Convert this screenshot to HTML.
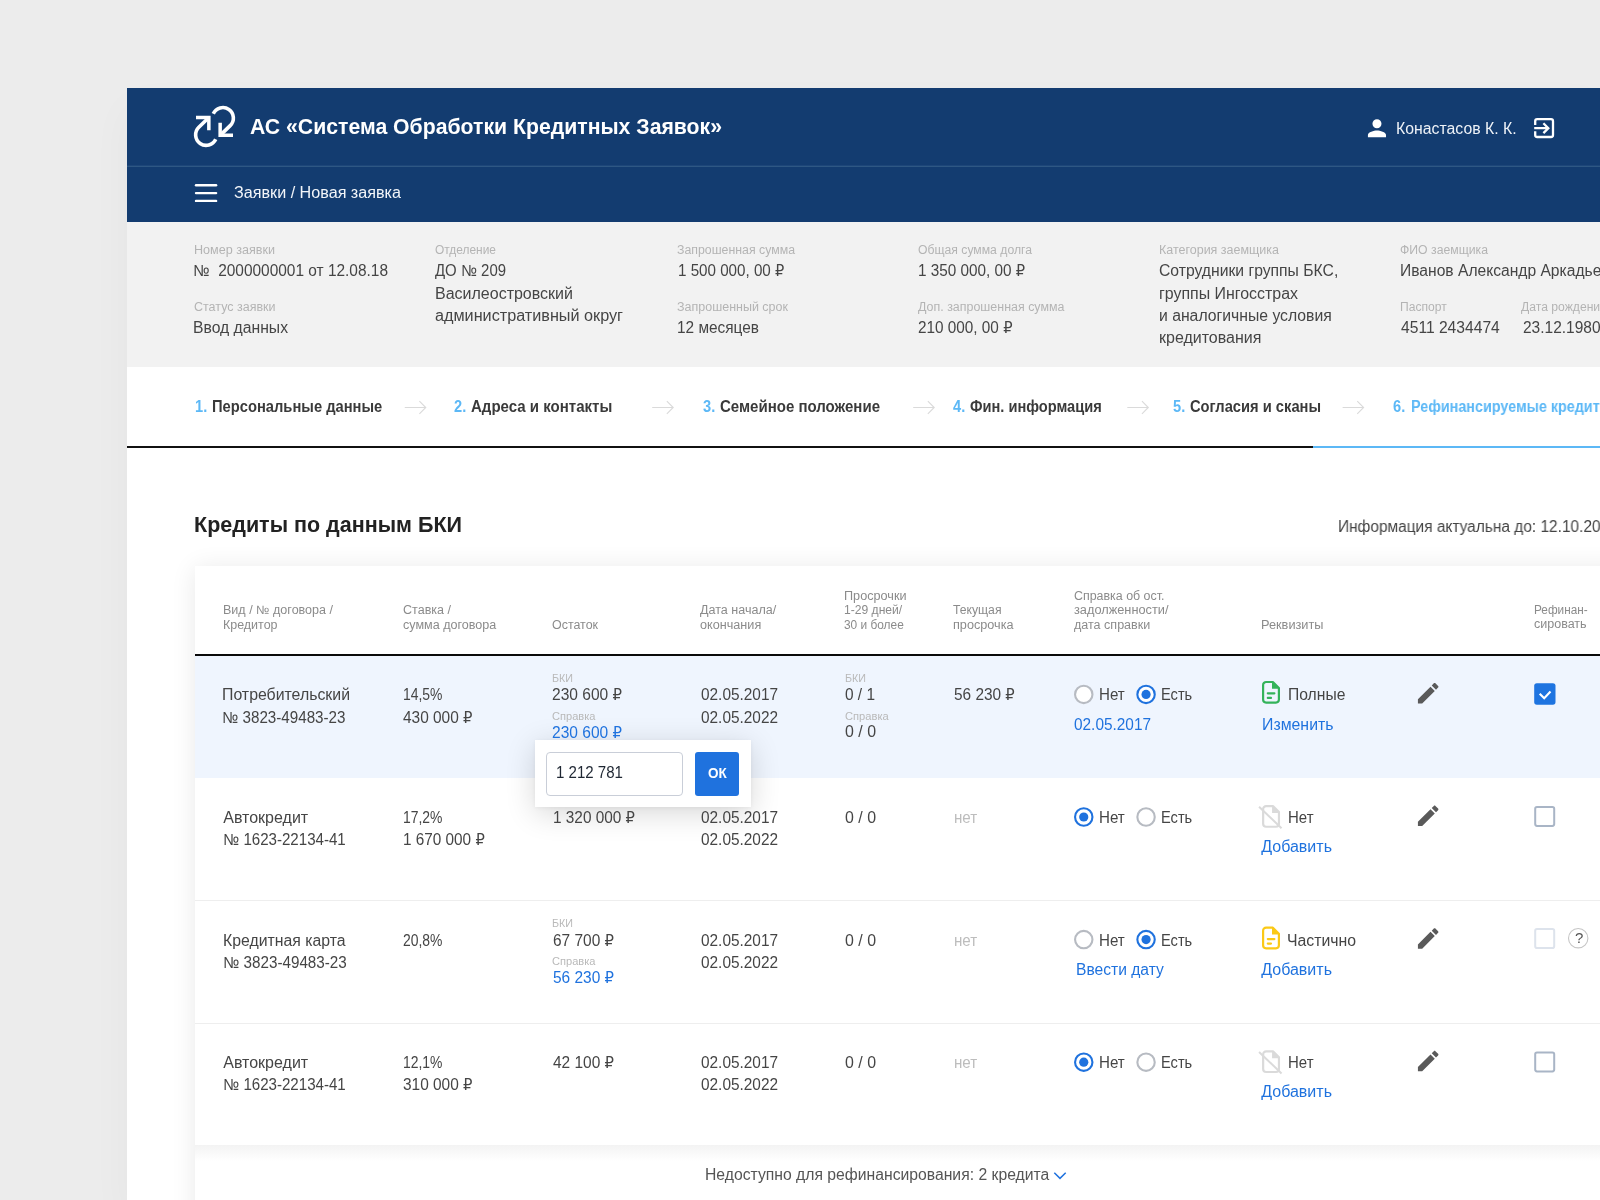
<!DOCTYPE html>
<html lang="ru">
<head>
<meta charset="utf-8">
<title>АС «Система Обработки Кредитных Заявок»</title>
<style>
html,body{margin:0;padding:0;}
body{width:1600px;height:1200px;overflow:hidden;background:#ececec;position:relative;font-family:"Liberation Sans","DejaVu Sans",sans-serif;}
.abs{position:absolute;}
.t{position:absolute;white-space:nowrap;margin:0;padding:0;transform-origin:0 50%;}
.r{font-family:"DejaVu Sans",sans-serif;font-size:.96em;letter-spacing:0;}
#app{left:127px;top:88px;width:1473px;height:1112px;background:#fff;box-shadow:0 20px 40px rgba(0,0,0,.035);}
#hdr{left:127px;top:88px;width:1473px;height:134px;background:#133c70;}
#hsep{left:127px;top:165px;width:1473px;height:1px;background:#1d4679;}
#hsep2{left:127px;top:166px;width:1473px;height:1px;background:#2e5783;}
#info{left:127px;top:222px;width:1473px;height:145px;background:#f2f2f2;}
#sline{left:127px;top:446px;width:1186px;height:2px;background:#111;}
#bline{left:1313px;top:446px;width:287px;height:2px;background:#5cb8f6;}
#card{left:195px;top:566px;width:1500px;height:700px;background:#fff;box-shadow:0 2px 24px rgba(0,0,0,.09);}
#thline{left:195px;top:654px;width:1405px;height:2px;background:#0a0a0a;}
#row1{left:195px;top:656px;width:1405px;height:122px;background:#eff5fe;}
.sep{left:195px;width:1405px;height:1px;background:#eeeeee;}
#fshadow{left:195px;top:1145px;width:1405px;height:16px;background:linear-gradient(#f3f3f3,#fff);}
#pop{left:535px;top:740px;width:216px;height:67px;background:#fff;box-shadow:0 6px 30px rgba(0,0,0,.16),0 1px 4px rgba(0,0,0,.05);}
#inp{left:546px;top:751.5px;width:135px;height:42.5px;border:1px solid #c9ced8;border-radius:4px;background:#fff;}
#btn{left:694.5px;top:751.5px;width:44.5px;height:44.5px;border-radius:3px;background:#1f72de;}
svg{position:absolute;overflow:visible;}
</style>
</head>
<body>
<div class="abs" id="app"></div>
<div class="abs" id="hdr"></div>
<div class="abs" id="hsep"></div>
<div class="abs" id="hsep2"></div>
<div class="abs" id="info"></div>
<div class="abs" id="sline"></div>
<div class="abs" id="bline"></div>
<div class="abs" id="card"></div>
<div class="abs" id="row1"></div>
<div class="abs" id="thline"></div>
<div class="abs sep" style="top:900px"></div>
<div class="abs sep" style="top:1023px"></div>
<div class="abs" id="fshadow"></div>
<svg class="abs" style="left:0;top:0" width="1600" height="1200" viewBox="0 0 1600 1200" ><g><path d="M196,117.55 H208.85 V130.2" fill="none" stroke="#fff" stroke-width="3.5" stroke-linejoin="miter"/><path d="M208.6,117.8 L198.81,127.3 A10.5,10.5 0 1 0 215.7,139.15" fill="none" stroke="#fff" stroke-width="3.6"/></g><g transform="rotate(180 214.5 126.46)"><path d="M196,117.55 H208.85 V130.2" fill="none" stroke="#fff" stroke-width="3.5" stroke-linejoin="miter"/><path d="M208.6,117.8 L198.81,127.3 A10.5,10.5 0 1 0 215.7,139.15" fill="none" stroke="#fff" stroke-width="3.6"/></g><path d="M196,185.3 H216.1" stroke="#fff" stroke-width="2.4" stroke-linecap="round" fill="none"/><path d="M196,193.1 H216.1" stroke="#fff" stroke-width="2.4" stroke-linecap="round" fill="none"/><path d="M196,200.9 H216.1" stroke="#fff" stroke-width="2.4" stroke-linecap="round" fill="none"/><g transform="translate(1363.4 114.7) scale(1.131)"><path fill="#fff" d="M12 12c2.21 0 4-1.79 4-4s-1.79-4-4-4-4 1.79-4 4 1.79 4 4 4zm0 2c-2.67 0-8 1.34-8 4v2h16v-2c0-2.66-5.33-4-8-4z"/></g><path d="M1535.2,124.9 V121.2 a2,2 0 0 1 2,-2 H1551 a2,2 0 0 1 2,2 V135 a2,2 0 0 1 -2,2 H1537.2 a2,2 0 0 1 -2,-2 V131.3" fill="none" stroke="#fff" stroke-width="2.3"/><path d="M1534.2,128.2 H1547.6 M1543.4,123.3 L1548.3,128.2 L1543.4,133.1" fill="none" stroke="#fff" stroke-width="2.3" stroke-linejoin="miter"/><path d="M404.75,407.5 H425.75 M419.4,401.15 L425.75,407.5 L419.4,413.85" fill="none" stroke="#dadada" stroke-width="1.1"/><path d="M652.2,407.5 H673.2 M666.85,401.15 L673.2,407.5 L666.85,413.85" fill="none" stroke="#dadada" stroke-width="1.1"/><path d="M913.2,407.5 H934.2 M927.85,401.15 L934.2,407.5 L927.85,413.85" fill="none" stroke="#dadada" stroke-width="1.1"/><path d="M1127.3,407.5 H1148.3 M1141.95,401.15 L1148.3,407.5 L1141.95,413.85" fill="none" stroke="#dadada" stroke-width="1.1"/><path d="M1342.6,407.5 H1363.6 M1357.25,401.15 L1363.6,407.5 L1357.25,413.85" fill="none" stroke="#dadada" stroke-width="1.1"/><circle cx="1083.75" cy="694.4" r="8.7" fill="#fff" stroke="#b7bbc2" stroke-width="2.1"/><circle cx="1146.05" cy="694.4" r="8.7" fill="#fff" stroke="#1f72de" stroke-width="2.1"/><circle cx="1146.05" cy="694.4" r="4.6" fill="#1f72de"/><circle cx="1083.75" cy="817.0" r="8.7" fill="#fff" stroke="#1f72de" stroke-width="2.1"/><circle cx="1083.75" cy="817.0" r="4.6" fill="#1f72de"/><circle cx="1146.05" cy="817.0" r="8.7" fill="#fff" stroke="#b7bbc2" stroke-width="2.1"/><circle cx="1083.75" cy="939.5999999999999" r="8.7" fill="#fff" stroke="#b7bbc2" stroke-width="2.1"/><circle cx="1146.05" cy="939.5999999999999" r="8.7" fill="#fff" stroke="#1f72de" stroke-width="2.1"/><circle cx="1146.05" cy="939.5999999999999" r="4.6" fill="#1f72de"/><circle cx="1083.75" cy="1062.2" r="8.7" fill="#fff" stroke="#1f72de" stroke-width="2.1"/><circle cx="1083.75" cy="1062.2" r="4.6" fill="#1f72de"/><circle cx="1146.05" cy="1062.2" r="8.7" fill="#fff" stroke="#b7bbc2" stroke-width="2.1"/><g transform="translate(1262 680.9)"><path d="M4.1,1.1 H10.9 L16.9,7.1 V18.7 a3,3 0 0 1 -3,3 H4.1 a3,3 0 0 1 -3,-3 V4.1 a3,3 0 0 1 3,-3 z" fill="none" stroke="#34b35a" stroke-width="2.2" stroke-linejoin="round"/><path d="M10,1.1 V7.9 H16.9 L10.9,1.1z" fill="#34b35a"/><path d="M5.8,12.45 H12.4 M5.8,17 H9" fill="none" stroke="#34b35a" stroke-width="2.2" stroke-linecap="round"/></g><g transform="translate(1262.05 805.05)"><path d="M4.1,1.1 H10.9 L16.9,7.1 V18.7 a3,3 0 0 1 -3,3 H4.1 a3,3 0 0 1 -3,-3 V4.1 a3,3 0 0 1 3,-3 z" fill="none" stroke="#dadada" stroke-width="2.2" stroke-linejoin="round"/><path d="M10,1.1 V7.9 H16.9 L10.9,1.1z" fill="#dadada"/><path d="M-3,1.65 L19.5,23.25" fill="none" stroke="#dadada" stroke-width="2"/></g><g transform="translate(1262 926.6)"><path d="M4.1,1.1 H10.9 L16.9,7.1 V18.7 a3,3 0 0 1 -3,3 H4.1 a3,3 0 0 1 -3,-3 V4.1 a3,3 0 0 1 3,-3 z" fill="none" stroke="#fbc916" stroke-width="2.2" stroke-linejoin="round"/><path d="M10,1.1 V7.9 H16.9 L10.9,1.1z" fill="#fbc916"/><path d="M5.8,12.45 H12.4 M5.8,17 H9" fill="none" stroke="#fbc916" stroke-width="2.2" stroke-linecap="round"/></g><g transform="translate(1262.05 1050.3)"><path d="M4.1,1.1 H10.9 L16.9,7.1 V18.7 a3,3 0 0 1 -3,3 H4.1 a3,3 0 0 1 -3,-3 V4.1 a3,3 0 0 1 3,-3 z" fill="none" stroke="#dadada" stroke-width="2.2" stroke-linejoin="round"/><path d="M10,1.1 V7.9 H16.9 L10.9,1.1z" fill="#dadada"/><path d="M-3,1.65 L19.5,23.25" fill="none" stroke="#dadada" stroke-width="2"/></g><g transform="translate(1414.5 679.6) scale(1.139)"><path fill="#5a5a5a" d="M3 17.25V21h3.75L17.81 9.94l-3.75-3.75L3 17.25zM20.71 7.04c.39-.39.39-1.02 0-1.41l-2.34-2.34c-.39-.39-1.02-.39-1.41 0l-1.83 1.83 3.75 3.75 1.83-1.83z"/></g><g transform="translate(1414.5 802.2) scale(1.139)"><path fill="#5a5a5a" d="M3 17.25V21h3.75L17.81 9.94l-3.75-3.75L3 17.25zM20.71 7.04c.39-.39.39-1.02 0-1.41l-2.34-2.34c-.39-.39-1.02-.39-1.41 0l-1.83 1.83 3.75 3.75 1.83-1.83z"/></g><g transform="translate(1414.5 924.8) scale(1.139)"><path fill="#5a5a5a" d="M3 17.25V21h3.75L17.81 9.94l-3.75-3.75L3 17.25zM20.71 7.04c.39-.39.39-1.02 0-1.41l-2.34-2.34c-.39-.39-1.02-.39-1.41 0l-1.83 1.83 3.75 3.75 1.83-1.83z"/></g><g transform="translate(1414.5 1047.4) scale(1.139)"><path fill="#5a5a5a" d="M3 17.25V21h3.75L17.81 9.94l-3.75-3.75L3 17.25zM20.71 7.04c.39-.39.39-1.02 0-1.41l-2.34-2.34c-.39-.39-1.02-.39-1.41 0l-1.83 1.83 3.75 3.75 1.83-1.83z"/></g><rect x="1534.2" y="683.2" width="21.3" height="21.5" rx="2.6" fill="#1e74e0"/><path d="M1539.7,693.8000000000001 L1544.2,698.3000000000001 L1550.5,691.5" fill="none" stroke="#fff" stroke-width="2.1"/><rect x="1535.2" y="806.9" width="19" height="19" rx="1.8" fill="#fff" stroke="#a9b5c6" stroke-width="2"/><rect x="1535.2" y="929" width="19" height="19" rx="1.8" fill="#fff" stroke="#dde3ec" stroke-width="2"/><rect x="1535.2" y="1052.4" width="19" height="19" rx="1.8" fill="#fff" stroke="#a9b5c6" stroke-width="2"/><circle cx="1578.2" cy="938.2" r="9.7" fill="#fff" stroke="#c6c6c6" stroke-width="1.1"/><path d="M1054.3,1172.8 L1060,1178.4 L1065.7,1172.8" fill="none" stroke="#1f72de" stroke-width="1.5"/></svg>
<div class="abs" id="pop"></div>
<div class="abs" id="inp"></div>
<div class="abs" id="btn"></div>
<div id="txt" style="position:absolute;left:0;top:0;width:1600px;height:1200px;will-change:transform;">
<div class="t" style="left:250.00px;top:113.00px;font-size:22px;line-height:28px;color:#fff;font-weight:700;transform:scaleX(0.9650);">АС «Система Обработки Кредитных Заявок»</div>
<div class="t" style="left:1395.70px;top:119.00px;font-size:16px;line-height:20px;color:#eef2f7;transform:scaleX(0.9885);">Конастасов К. К.</div>
<div class="t" style="left:234.00px;top:183.00px;font-size:16px;line-height:20px;color:#f2f5f9;transform:scaleX(1.0094);">Заявки / Новая заявка</div>
<div class="t" style="left:194.00px;top:243.00px;font-size:12px;line-height:15px;color:#b4b4b4;transform:scaleX(1.0481);">Номер заявки</div>
<div class="t" style="left:193.00px;top:261.00px;font-size:16px;line-height:20px;color:#454545;transform:scaleX(0.9649);">№  2000000001 от 12.08.18</div>
<div class="t" style="left:194.00px;top:300.00px;font-size:12px;line-height:15px;color:#b4b4b4;transform:scaleX(1.0411);">Статус заявки</div>
<div class="t" style="left:193.00px;top:318.00px;font-size:16px;line-height:20px;color:#454545;transform:scaleX(0.9821);">Ввод данных</div>
<div class="t" style="left:435.00px;top:243.00px;font-size:12px;line-height:15px;color:#b4b4b4;transform:scaleX(0.9936);">Отделение</div>
<div class="t" style="left:435.00px;top:261.00px;font-size:16px;line-height:20px;color:#454545;transform:scaleX(0.9338);">ДО № 209</div>
<div class="t" style="left:435.00px;top:284.00px;font-size:16px;line-height:20px;color:#454545;">Василеостровский</div>
<div class="t" style="left:435.00px;top:306.00px;font-size:16px;line-height:20px;color:#454545;transform:scaleX(1.0126);">административный округ</div>
<div class="t" style="left:677.00px;top:243.00px;font-size:12px;line-height:15px;color:#b4b4b4;transform:scaleX(1.0272);">Запрошенная сумма</div>
<div class="t" style="left:677.50px;top:261.00px;font-size:16px;line-height:20px;color:#454545;transform:scaleX(0.9479);">1 500 000, 00 <span class="r">₽</span></div>
<div class="t" style="left:677.00px;top:300.00px;font-size:12px;line-height:15px;color:#b4b4b4;transform:scaleX(1.0413);">Запрошенный срок</div>
<div class="t" style="left:677.00px;top:318.00px;font-size:16px;line-height:20px;color:#454545;transform:scaleX(0.9626);">12 месяцев</div>
<div class="t" style="left:918.00px;top:243.00px;font-size:12px;line-height:15px;color:#b4b4b4;transform:scaleX(1.0163);">Общая сумма долга</div>
<div class="t" style="left:918.00px;top:261.00px;font-size:16px;line-height:20px;color:#454545;transform:scaleX(0.9546);">1 350 000, 00 <span class="r">₽</span></div>
<div class="t" style="left:918.00px;top:300.00px;font-size:12px;line-height:15px;color:#b4b4b4;transform:scaleX(1.0373);">Доп. запрошенная сумма</div>
<div class="t" style="left:918.00px;top:318.00px;font-size:16px;line-height:20px;color:#454545;transform:scaleX(0.9570);">210 000, 00 <span class="r">₽</span></div>
<div class="t" style="left:1158.75px;top:243.00px;font-size:12px;line-height:15px;color:#b4b4b4;transform:scaleX(1.0408);">Категория заемщика</div>
<div class="t" style="left:1159.00px;top:261.00px;font-size:16px;line-height:20px;color:#454545;transform:scaleX(0.9818);">Сотрудники группы БКС,</div>
<div class="t" style="left:1159.00px;top:284.00px;font-size:16px;line-height:20px;color:#454545;transform:scaleX(0.9952);">группы Ингосстрах</div>
<div class="t" style="left:1159.00px;top:306.00px;font-size:16px;line-height:20px;color:#454545;transform:scaleX(0.9840);">и аналогичные условия</div>
<div class="t" style="left:1159.00px;top:328.00px;font-size:16px;line-height:20px;color:#454545;">кредитования</div>
<div class="t" style="left:1399.50px;top:243.00px;font-size:12px;line-height:15px;color:#b4b4b4;transform:scaleX(1.0199);">ФИО заемщика</div>
<div class="t" style="left:1399.50px;top:261.00px;font-size:16px;line-height:20px;color:#454545;transform:scaleX(0.9760);">Иванов Александр Аркадьевич</div>
<div class="t" style="left:1400.00px;top:300.00px;font-size:12px;line-height:15px;color:#b4b4b4;transform:scaleX(1.0077);">Паспорт</div>
<div class="t" style="left:1401.25px;top:318.00px;font-size:16px;line-height:20px;color:#454545;transform:scaleX(0.9764);">4511 2434474</div>
<div class="t" style="left:1521.25px;top:300.00px;font-size:12px;line-height:15px;color:#b4b4b4;transform:scaleX(1.0129);">Дата рождения</div>
<div class="t" style="left:1522.50px;top:318.00px;font-size:16px;line-height:20px;color:#454545;transform:scaleX(0.9678);">23.12.1980</div>
<div class="t" style="left:195.00px;top:397.00px;font-size:16px;line-height:20px;color:#5cb8f6;font-weight:700;transform:scaleX(0.9143);">1.</div>
<div class="t" style="left:211.75px;top:397.00px;font-size:16px;line-height:20px;color:#3a3a3a;font-weight:700;transform:scaleX(0.9201);">Персональные данные</div>
<div class="t" style="left:453.75px;top:397.00px;font-size:16px;line-height:20px;color:#5cb8f6;font-weight:700;transform:scaleX(0.9143);">2.</div>
<div class="t" style="left:471.25px;top:397.00px;font-size:16px;line-height:20px;color:#3a3a3a;font-weight:700;transform:scaleX(0.9393);">Адреса и контакты</div>
<div class="t" style="left:702.50px;top:397.00px;font-size:16px;line-height:20px;color:#5cb8f6;font-weight:700;transform:scaleX(0.9143);">3.</div>
<div class="t" style="left:720.00px;top:397.00px;font-size:16px;line-height:20px;color:#3a3a3a;font-weight:700;transform:scaleX(0.9380);">Семейное положение</div>
<div class="t" style="left:952.50px;top:397.00px;font-size:16px;line-height:20px;color:#5cb8f6;font-weight:700;transform:scaleX(0.9143);">4.</div>
<div class="t" style="left:970.00px;top:397.00px;font-size:16px;line-height:20px;color:#3a3a3a;font-weight:700;transform:scaleX(0.9136);">Фин. информация</div>
<div class="t" style="left:1172.50px;top:397.00px;font-size:16px;line-height:20px;color:#5cb8f6;font-weight:700;transform:scaleX(0.9143);">5.</div>
<div class="t" style="left:1189.50px;top:397.00px;font-size:16px;line-height:20px;color:#3a3a3a;font-weight:700;transform:scaleX(0.9187);">Согласия и сканы</div>
<div class="t" style="left:1393.00px;top:397.00px;font-size:16px;line-height:20px;color:#5cb8f6;font-weight:700;transform:scaleX(0.9143);">6.</div>
<div class="t" style="left:1411.00px;top:397.00px;font-size:16px;line-height:20px;color:#5cb8f6;font-weight:700;transform:scaleX(0.8976);">Рефинансируемые кредиты</div>
<div class="t" style="left:193.60px;top:511.00px;font-size:22px;line-height:28px;color:#222;font-weight:700;transform:scaleX(0.9777);">Кредиты по данным БКИ</div>
<div class="t" style="left:1338.25px;top:517.00px;font-size:16px;line-height:20px;color:#444;transform:scaleX(0.9654);">Информация актуальна до: 12.10.2018</div>
<div class="t" style="left:223.00px;top:603.00px;font-size:12px;line-height:15px;color:#8b8b8b;transform:scaleX(1.0445);">Вид / № договора /</div>
<div class="t" style="left:223.00px;top:618.00px;font-size:12px;line-height:15px;color:#8b8b8b;transform:scaleX(1.0381);">Кредитор</div>
<div class="t" style="left:402.50px;top:603.00px;font-size:12px;line-height:15px;color:#8b8b8b;transform:scaleX(1.0449);">Ставка /</div>
<div class="t" style="left:402.50px;top:618.00px;font-size:12px;line-height:15px;color:#8b8b8b;transform:scaleX(1.0465);">сумма договора</div>
<div class="t" style="left:552.00px;top:618.00px;font-size:12px;line-height:15px;color:#8b8b8b;transform:scaleX(1.0363);">Остаток</div>
<div class="t" style="left:700.00px;top:603.00px;font-size:12px;line-height:15px;color:#8b8b8b;transform:scaleX(1.0461);">Дата начала/</div>
<div class="t" style="left:700.00px;top:618.00px;font-size:12px;line-height:15px;color:#8b8b8b;transform:scaleX(1.0538);">окончания</div>
<div class="t" style="left:844.25px;top:589.00px;font-size:12px;line-height:15px;color:#8b8b8b;transform:scaleX(1.0546);">Просрочки</div>
<div class="t" style="left:844.25px;top:603.00px;font-size:12px;line-height:15px;color:#8b8b8b;transform:scaleX(1.0095);">1-29 дней/</div>
<div class="t" style="left:844.25px;top:618.00px;font-size:12px;line-height:15px;color:#8b8b8b;transform:scaleX(0.9899);">30 и более</div>
<div class="t" style="left:953.25px;top:603.00px;font-size:12px;line-height:15px;color:#8b8b8b;transform:scaleX(1.0154);">Текущая</div>
<div class="t" style="left:953.25px;top:618.00px;font-size:12px;line-height:15px;color:#8b8b8b;transform:scaleX(1.0545);">просрочка</div>
<div class="t" style="left:1073.75px;top:589.00px;font-size:12px;line-height:15px;color:#8b8b8b;transform:scaleX(1.0347);">Справка об ост.</div>
<div class="t" style="left:1073.75px;top:603.00px;font-size:12px;line-height:15px;color:#8b8b8b;transform:scaleX(1.0646);">задолженности/</div>
<div class="t" style="left:1073.75px;top:618.00px;font-size:12px;line-height:15px;color:#8b8b8b;transform:scaleX(1.0450);">дата справки</div>
<div class="t" style="left:1261.25px;top:618.00px;font-size:12px;line-height:15px;color:#8b8b8b;transform:scaleX(1.0627);">Реквизиты</div>
<div class="t" style="left:1534.40px;top:603.00px;font-size:12px;line-height:15px;color:#8b8b8b;transform:scaleX(0.9807);">Рефинан-</div>
<div class="t" style="left:1534.40px;top:617.00px;font-size:12px;line-height:15px;color:#8b8b8b;transform:scaleX(1.0426);">сировать</div>
<div class="t" style="left:222.00px;top:685.00px;font-size:16px;line-height:20px;color:#454545;transform:scaleX(0.9910);">Потребительский</div>
<div class="t" style="left:222.00px;top:708.00px;font-size:16px;line-height:20px;color:#454545;transform:scaleX(0.9489);">№ 3823-49483-23</div>
<div class="t" style="left:403.00px;top:685.00px;font-size:16px;line-height:20px;color:#454545;transform:scaleX(0.8705);">14,5%</div>
<div class="t" style="left:403.00px;top:708.00px;font-size:16px;line-height:20px;color:#454545;transform:scaleX(0.9644);">430 000 <span class="r">₽</span></div>
<div class="t" style="left:552.00px;top:671.00px;font-size:11px;line-height:14px;color:#b9b9b9;transform:scaleX(0.9746);">БКИ</div>
<div class="t" style="left:552.00px;top:685.00px;font-size:16px;line-height:20px;color:#454545;transform:scaleX(0.9714);">230 600 <span class="r">₽</span></div>
<div class="t" style="left:552.00px;top:709.00px;font-size:11px;line-height:14px;color:#b9b9b9;transform:scaleX(1.0080);">Справка</div>
<div class="t" style="left:552.00px;top:723.00px;font-size:16px;line-height:20px;color:#1f72de;transform:scaleX(0.9714);">230 600 <span class="r">₽</span></div>
<div class="t" style="left:700.50px;top:685.00px;font-size:16px;line-height:20px;color:#454545;transform:scaleX(0.9616);">02.05.2017</div>
<div class="t" style="left:700.50px;top:708.00px;font-size:16px;line-height:20px;color:#454545;transform:scaleX(0.9616);">02.05.2022</div>
<div class="t" style="left:845.00px;top:671.00px;font-size:11px;line-height:14px;color:#b9b9b9;transform:scaleX(0.9746);">БКИ</div>
<div class="t" style="left:845.00px;top:685.00px;font-size:16px;line-height:20px;color:#454545;transform:scaleX(0.9634);">0 / 1</div>
<div class="t" style="left:845.00px;top:709.00px;font-size:11px;line-height:14px;color:#b9b9b9;transform:scaleX(1.0138);">Справка</div>
<div class="t" style="left:845.00px;top:722.00px;font-size:16px;line-height:20px;color:#454545;transform:scaleX(0.9955);">0 / 0</div>
<div class="t" style="left:953.75px;top:685.00px;font-size:16px;line-height:20px;color:#454545;transform:scaleX(0.9617);">56 230 <span class="r">₽</span></div>
<div class="t" style="left:1098.75px;top:685.00px;font-size:16px;line-height:20px;color:#454545;transform:scaleX(0.9450);">Нет</div>
<div class="t" style="left:1161.25px;top:685.00px;font-size:16px;line-height:20px;color:#454545;transform:scaleX(0.9149);">Есть</div>
<div class="t" style="left:1074.25px;top:715.00px;font-size:16px;line-height:20px;color:#1f72de;transform:scaleX(0.9616);">02.05.2017</div>
<div class="t" style="left:1288.40px;top:685.00px;font-size:16px;line-height:20px;color:#454545;transform:scaleX(0.9783);">Полные</div>
<div class="t" style="left:1261.75px;top:715.00px;font-size:16px;line-height:20px;color:#1f72de;transform:scaleX(0.9907);">Изменить</div>
<div class="t" style="left:223.25px;top:808.00px;font-size:16px;line-height:20px;color:#454545;">Автокредит</div>
<div class="t" style="left:223.00px;top:830.00px;font-size:16px;line-height:20px;color:#454545;transform:scaleX(0.9431);">№ 1623-22134-41</div>
<div class="t" style="left:403.00px;top:808.00px;font-size:16px;line-height:20px;color:#454545;transform:scaleX(0.8705);">17,2%</div>
<div class="t" style="left:403.25px;top:830.00px;font-size:16px;line-height:20px;color:#454545;transform:scaleX(0.9572);">1 670 000 <span class="r">₽</span></div>
<div class="t" style="left:552.50px;top:808.00px;font-size:16px;line-height:20px;color:#454545;transform:scaleX(0.9601);">1 320 000 <span class="r">₽</span></div>
<div class="t" style="left:700.50px;top:808.00px;font-size:16px;line-height:20px;color:#454545;transform:scaleX(0.9616);">02.05.2017</div>
<div class="t" style="left:700.50px;top:830.00px;font-size:16px;line-height:20px;color:#454545;transform:scaleX(0.9616);">02.05.2022</div>
<div class="t" style="left:845.00px;top:808.00px;font-size:16px;line-height:20px;color:#454545;transform:scaleX(0.9955);">0 / 0</div>
<div class="t" style="left:953.75px;top:808.00px;font-size:16px;line-height:20px;color:#bdbdbd;transform:scaleX(0.9478);">нет</div>
<div class="t" style="left:1098.75px;top:808.00px;font-size:16px;line-height:20px;color:#454545;transform:scaleX(0.9450);">Нет</div>
<div class="t" style="left:1161.25px;top:808.00px;font-size:16px;line-height:20px;color:#454545;transform:scaleX(0.9149);">Есть</div>
<div class="t" style="left:1287.50px;top:808.00px;font-size:16px;line-height:20px;color:#454545;transform:scaleX(0.9358);">Нет</div>
<div class="t" style="left:1261.25px;top:837.00px;font-size:16px;line-height:20px;color:#1f72de;">Добавить</div>
<div class="t" style="left:223.00px;top:931.00px;font-size:16px;line-height:20px;color:#454545;transform:scaleX(0.9874);">Кредитная карта</div>
<div class="t" style="left:223.00px;top:953.00px;font-size:16px;line-height:20px;color:#454545;transform:scaleX(0.9508);">№ 3823-49483-23</div>
<div class="t" style="left:403.00px;top:931.00px;font-size:16px;line-height:20px;color:#454545;transform:scaleX(0.8705);">20,8%</div>
<div class="t" style="left:552.00px;top:916.00px;font-size:11px;line-height:14px;color:#b9b9b9;transform:scaleX(0.9746);">БКИ</div>
<div class="t" style="left:552.50px;top:931.00px;font-size:16px;line-height:20px;color:#454545;transform:scaleX(0.9656);">67 700 <span class="r">₽</span></div>
<div class="t" style="left:552.00px;top:954.00px;font-size:11px;line-height:14px;color:#b9b9b9;transform:scaleX(1.0080);">Справка</div>
<div class="t" style="left:552.50px;top:968.00px;font-size:16px;line-height:20px;color:#1f72de;transform:scaleX(0.9656);">56 230 <span class="r">₽</span></div>
<div class="t" style="left:700.50px;top:931.00px;font-size:16px;line-height:20px;color:#454545;transform:scaleX(0.9616);">02.05.2017</div>
<div class="t" style="left:700.50px;top:953.00px;font-size:16px;line-height:20px;color:#454545;transform:scaleX(0.9616);">02.05.2022</div>
<div class="t" style="left:845.00px;top:931.00px;font-size:16px;line-height:20px;color:#454545;transform:scaleX(0.9955);">0 / 0</div>
<div class="t" style="left:953.75px;top:931.00px;font-size:16px;line-height:20px;color:#bdbdbd;transform:scaleX(0.9478);">нет</div>
<div class="t" style="left:1098.75px;top:931.00px;font-size:16px;line-height:20px;color:#454545;transform:scaleX(0.9450);">Нет</div>
<div class="t" style="left:1161.25px;top:931.00px;font-size:16px;line-height:20px;color:#454545;transform:scaleX(0.9149);">Есть</div>
<div class="t" style="left:1076.00px;top:960.00px;font-size:16px;line-height:20px;color:#1f72de;transform:scaleX(0.9756);">Ввести дату</div>
<div class="t" style="left:1287.25px;top:931.00px;font-size:16px;line-height:20px;color:#454545;transform:scaleX(0.9878);">Частично</div>
<div class="t" style="left:1261.25px;top:960.00px;font-size:16px;line-height:20px;color:#1f72de;">Добавить</div>
<div class="t" style="left:223.25px;top:1053.00px;font-size:16px;line-height:20px;color:#454545;">Автокредит</div>
<div class="t" style="left:223.00px;top:1075.00px;font-size:16px;line-height:20px;color:#454545;transform:scaleX(0.9431);">№ 1623-22134-41</div>
<div class="t" style="left:403.00px;top:1053.00px;font-size:16px;line-height:20px;color:#454545;transform:scaleX(0.8705);">12,1%</div>
<div class="t" style="left:403.00px;top:1075.00px;font-size:16px;line-height:20px;color:#454545;transform:scaleX(0.9644);">310 000 <span class="r">₽</span></div>
<div class="t" style="left:552.50px;top:1053.00px;font-size:16px;line-height:20px;color:#454545;transform:scaleX(0.9656);">42 100 <span class="r">₽</span></div>
<div class="t" style="left:700.50px;top:1053.00px;font-size:16px;line-height:20px;color:#454545;transform:scaleX(0.9616);">02.05.2017</div>
<div class="t" style="left:700.50px;top:1075.00px;font-size:16px;line-height:20px;color:#454545;transform:scaleX(0.9616);">02.05.2022</div>
<div class="t" style="left:845.00px;top:1053.00px;font-size:16px;line-height:20px;color:#454545;transform:scaleX(0.9955);">0 / 0</div>
<div class="t" style="left:953.75px;top:1053.00px;font-size:16px;line-height:20px;color:#bdbdbd;transform:scaleX(0.9478);">нет</div>
<div class="t" style="left:1098.75px;top:1053.00px;font-size:16px;line-height:20px;color:#454545;transform:scaleX(0.9450);">Нет</div>
<div class="t" style="left:1161.25px;top:1053.00px;font-size:16px;line-height:20px;color:#454545;transform:scaleX(0.9149);">Есть</div>
<div class="t" style="left:1287.50px;top:1053.00px;font-size:16px;line-height:20px;color:#454545;transform:scaleX(0.9358);">Нет</div>
<div class="t" style="left:1261.25px;top:1082.00px;font-size:16px;line-height:20px;color:#1f72de;">Добавить</div>
<div class="t" style="left:705.00px;top:1165.00px;font-size:16px;line-height:20px;color:#555;transform:scaleX(0.9827);">Недоступно для рефинансирования: 2 кредита</div>
<div class="t" style="left:555.50px;top:763.00px;font-size:16px;line-height:20px;color:#1f2733;transform:scaleX(0.9412);">1 212 781</div>
<div class="t" style="left:707.50px;top:764.00px;font-size:14px;line-height:18px;color:#fff;font-weight:700;transform:scaleX(0.9646);">ОК</div>
<div class="t" style="left:1575.10px;top:928.00px;font-size:15px;line-height:19px;color:#555;">?</div>
</div>
</body>
</html>
